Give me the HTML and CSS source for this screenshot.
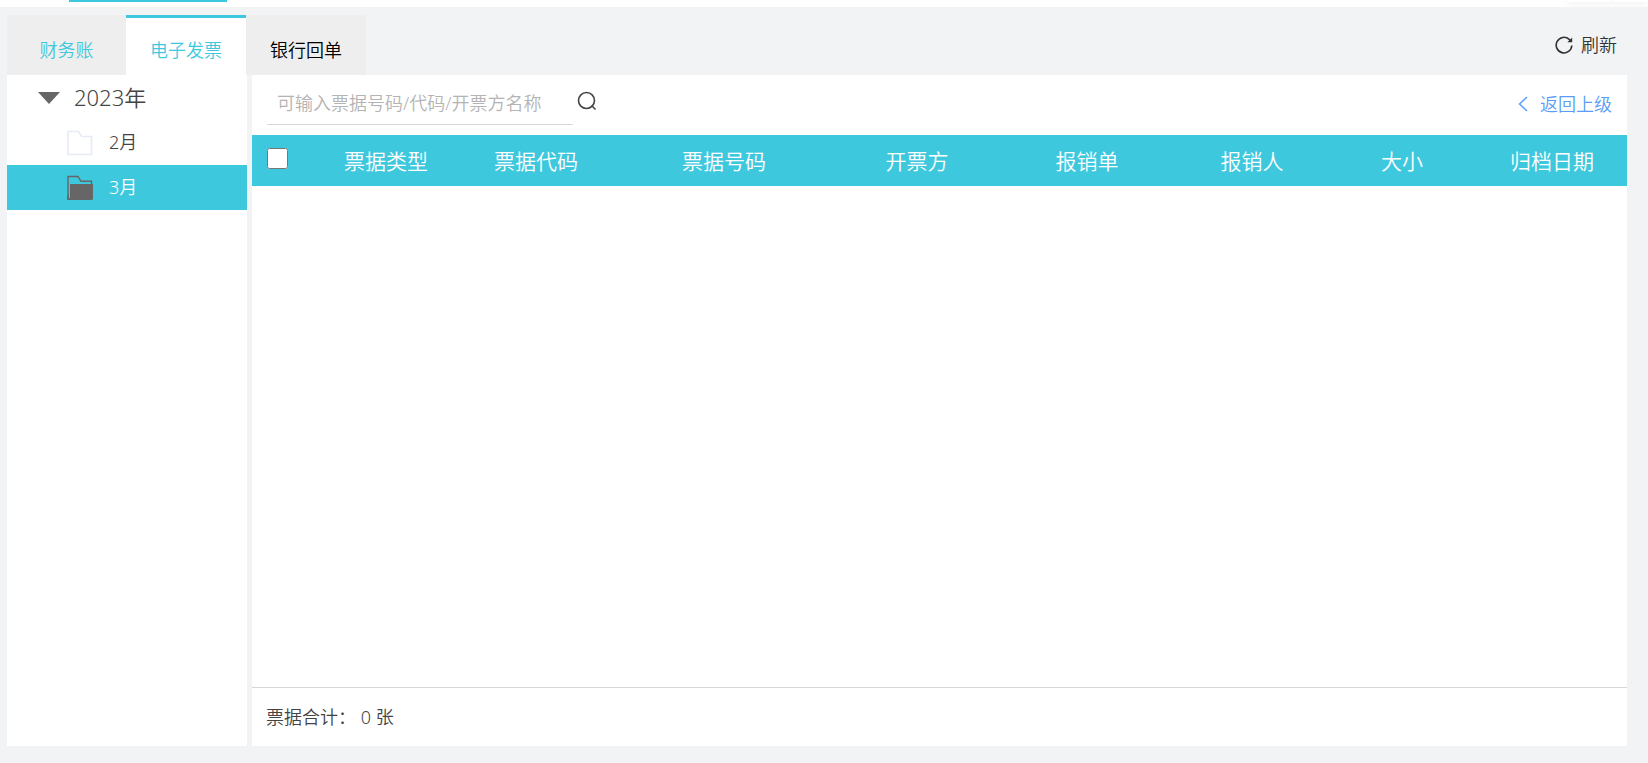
FILE: index.html
```
<!DOCTYPE html>
<html lang="zh-CN">
<head>
    <meta charset="UTF-8">
    <meta name="viewport" content="width=device-width, initial-scale=1.0">
    <title>电子发票</title>
    <link rel="stylesheet" href="styles.css">
</head>
<body>

<div class="top-bar">
    <div class="top-line"></div>
    <div class="top-box"></div>
    <div class="top-box"></div>
</div>

<div class="page">
    <div class="tab-bar">
        <nav class="tabs">
            <a href="#" class="tab visited">财务账</a>
            <a href="#" class="tab active">电子发票</a>
            <a href="#" class="tab">银行回单</a>
        </nav>
        <button type="button" class="refresh">
            <svg width="18" height="18" viewBox="0 0 18 18" fill="none" stroke="currentColor" stroke-width="1.6">
                <path d="M16.800 9.500a7.800 7.800 0 1 1-2.600-6.200l1.600 1.500"/>
                <path d="M17.200 1.400v4.800h-4.800z" fill="currentColor" stroke="none"/>
            </svg>
            刷新
        </button>
    </div>

    <div class="content">
        <aside class="tree">
            <button type="button" class="tree-year">
                <svg width="22" height="12" viewBox="0 0 22 12"><path d="M0 0h22L11 12z" fill="#666"/></svg>
                <span>2023年</span>
            </button>
            <button type="button" class="tree-month">
                <svg width="26" height="26" viewBox="0 0 26 26" fill="none" stroke="#e6ebf5" stroke-width="1.6">
                    <path d="M1 1.500h10.500l3 5h10v18H1z"/>
                </svg>
                <span>2月</span>
            </button>
            <button type="button" class="tree-month selected">
                <svg width="26" height="26" viewBox="0 0 26 26" fill="none" stroke="#666" stroke-width="1.4">
                    <path d="M3 24H1V1.500h10l3 4.800h10.500V9"/>
                    <path d="M3 9h23v15.500H3z" fill="#666" stroke="none"/>
                    <path d="M1 20v4.300h24"/>
                </svg>
                <span>3月</span>
            </button>
        </aside>

        <main class="panel">
            <div class="search-row">
                <form class="search">
                    <input type="text" class="search-input" aria-label="搜索票据" placeholder="可输入票据号码/代码/开票方名称">
                    <button type="button" class="search-btn" aria-label="搜索">
                        <svg width="20" height="20" viewBox="0 0 20 20" fill="none" stroke="currentColor" stroke-width="1.6">
                            <circle cx="9.500" cy="9.500" r="8"/>
                            <path d="M14.500 14.500l4 4"/>
                        </svg>
                    </button>
                </form>
                <a href="#" class="back">
                    <svg width="10" height="16" viewBox="0 0 10 16" fill="none" stroke="currentColor" stroke-width="1.500"><path d="M9 1L1.500 8L9 15"/></svg>
                    返回上级
                </a>
            </div>

            <table class="invoice-table">
                <thead>
                    <tr>
                        <th class="col-check"><input type="checkbox" class="check-all" aria-label="全选"></th>
                        <th class="col-normal">票据类型</th>
                        <th class="col-normal">票据代码</th>
                        <th>票据号码</th>
                        <th class="col-party">开票方</th>
                        <th class="col-bill">报销单</th>
                        <th class="col-normal">报销人</th>
                        <th class="col-normal">大小</th>
                        <th class="col-normal">归档日期</th>
                    </tr>
                </thead>
                <tbody></tbody>
            </table>

            <div class="total">票据合计： <span>0 张</span></div>
        </main>
    </div>
</div>

</body>
</html>
```
FILE: styles.css
```
* {
    box-sizing: border-box;
}
body {
    margin: 0;
    min-height: 100vh;
    display: flex;
    flex-direction: column;
    background: #f2f3f5;
    color: #444;
    font-family: "Noto Sans", "Noto Sans CJK SC", sans-serif;
    font-size: 18px;
    font-weight: 350;
    line-height: 24px;
}
button, input {
    font: inherit;
    color: inherit;
}
button {
    border: none;
    background: none;
    padding: 0;
    cursor: pointer;
}
a {
    text-decoration: none;
}
svg {
    flex: none;
}

/* bottom edge of the main navigation */
.top-bar {
    display: flex;
    height: 7px;
    padding-left: 69px;
    gap: 1px;
    background: #fff;
    overflow: hidden;
}
.top-line {
    width: 158px;
    height: 2px;
    margin-right: auto;
    background: #3ec8de;
}
.top-box {
    width: 44px;
    height: 2px;
    background: #fff;
    box-shadow: 0 0 8px rgba(0, 0, 0, 0.2);
}
.top-box:last-child {
    width: 36px;
}

.page {
    flex: 1;
    display: flex;
    flex-direction: column;
    padding: 8px 21px 17px 7px;
}
.tab-bar {
    display: flex;
    justify-content: space-between;
}
.tabs {
    display: flex;
}
.tab {
    width: 120px;
    height: 60px;
    padding-top: 20px;
    border-top: 3px solid #eee;
    background: #eee;
    color: #000;
    text-align: center;
}
.tab.visited {
    width: 119px;
    color: #3ec8de;
}
.tab.active {
    border-top-color: #3ec8de;
    background: #fff;
    color: #3ec8de;
}
.refresh {
    display: flex;
    align-items: center;
    gap: 8px;
    height: 60px;
    padding-right: 10px;
    color: #333;
}

.content {
    flex: 1;
    display: flex;
    gap: 5px;
}
.tree {
    width: 240px;
    flex: none;
    background: #fff;
}
.tree-year, .tree-month {
    display: flex;
    align-items: center;
    width: 100%;
    height: 45px;
}
.tree-year span, .tree-month span {
    padding-bottom: 2px;
}
.tree-year {
    padding-left: 31px;
    gap: 14px;
    font-size: 22px;
}
.tree-month {
    padding-left: 60px;
    gap: 16px;
}
.tree-month.selected {
    background: #3ec8de;
    color: #fff;
}

.panel {
    flex: 1;
    display: flex;
    flex-direction: column;
    background: #fff;
}
.search-row {
    display: flex;
    justify-content: space-between;
    align-items: center;
    height: 60px;
    padding: 0 15px;
}
.search {
    display: flex;
    align-items: center;
    gap: 4px;
}
.search-input {
    width: 306px;
    height: 40px;
    padding: 0 10px 4px;
    border: none;
    border-bottom: 1px solid #d8d8d8;
    outline: none;
    background: none;
}
.search-input::placeholder {
    color: #b4b4b4;
}
.search-btn {
    height: 28px;
    display: flex;
}
.back {
    display: flex;
    align-items: center;
    gap: 12px;
    padding-bottom: 2px;
    color: #5a9cf8;
}

.invoice-table {
    width: 100%;
    table-layout: fixed;
    border-collapse: collapse;
    background: #3ec8de;
    color: #fff;
    font-size: 21px;
}
.invoice-table th {
    height: 51px;
    padding: 0;
    font-weight: 350;
}
.invoice-table .col-check {
    width: 59px;
    padding: 0 0 4px 15px;
    text-align: left;
}
.col-normal {
    width: 150px;
}
.col-party {
    width: 160px;
}
.col-bill {
    width: 180px;
}
.check-all {
    display: block;
    width: 21px;
    height: 21px;
    margin: 0;
}

.total {
    margin-top: auto;
    padding: 17px 14px;
    border-top: 1px solid #d8d8d8;
}
```
